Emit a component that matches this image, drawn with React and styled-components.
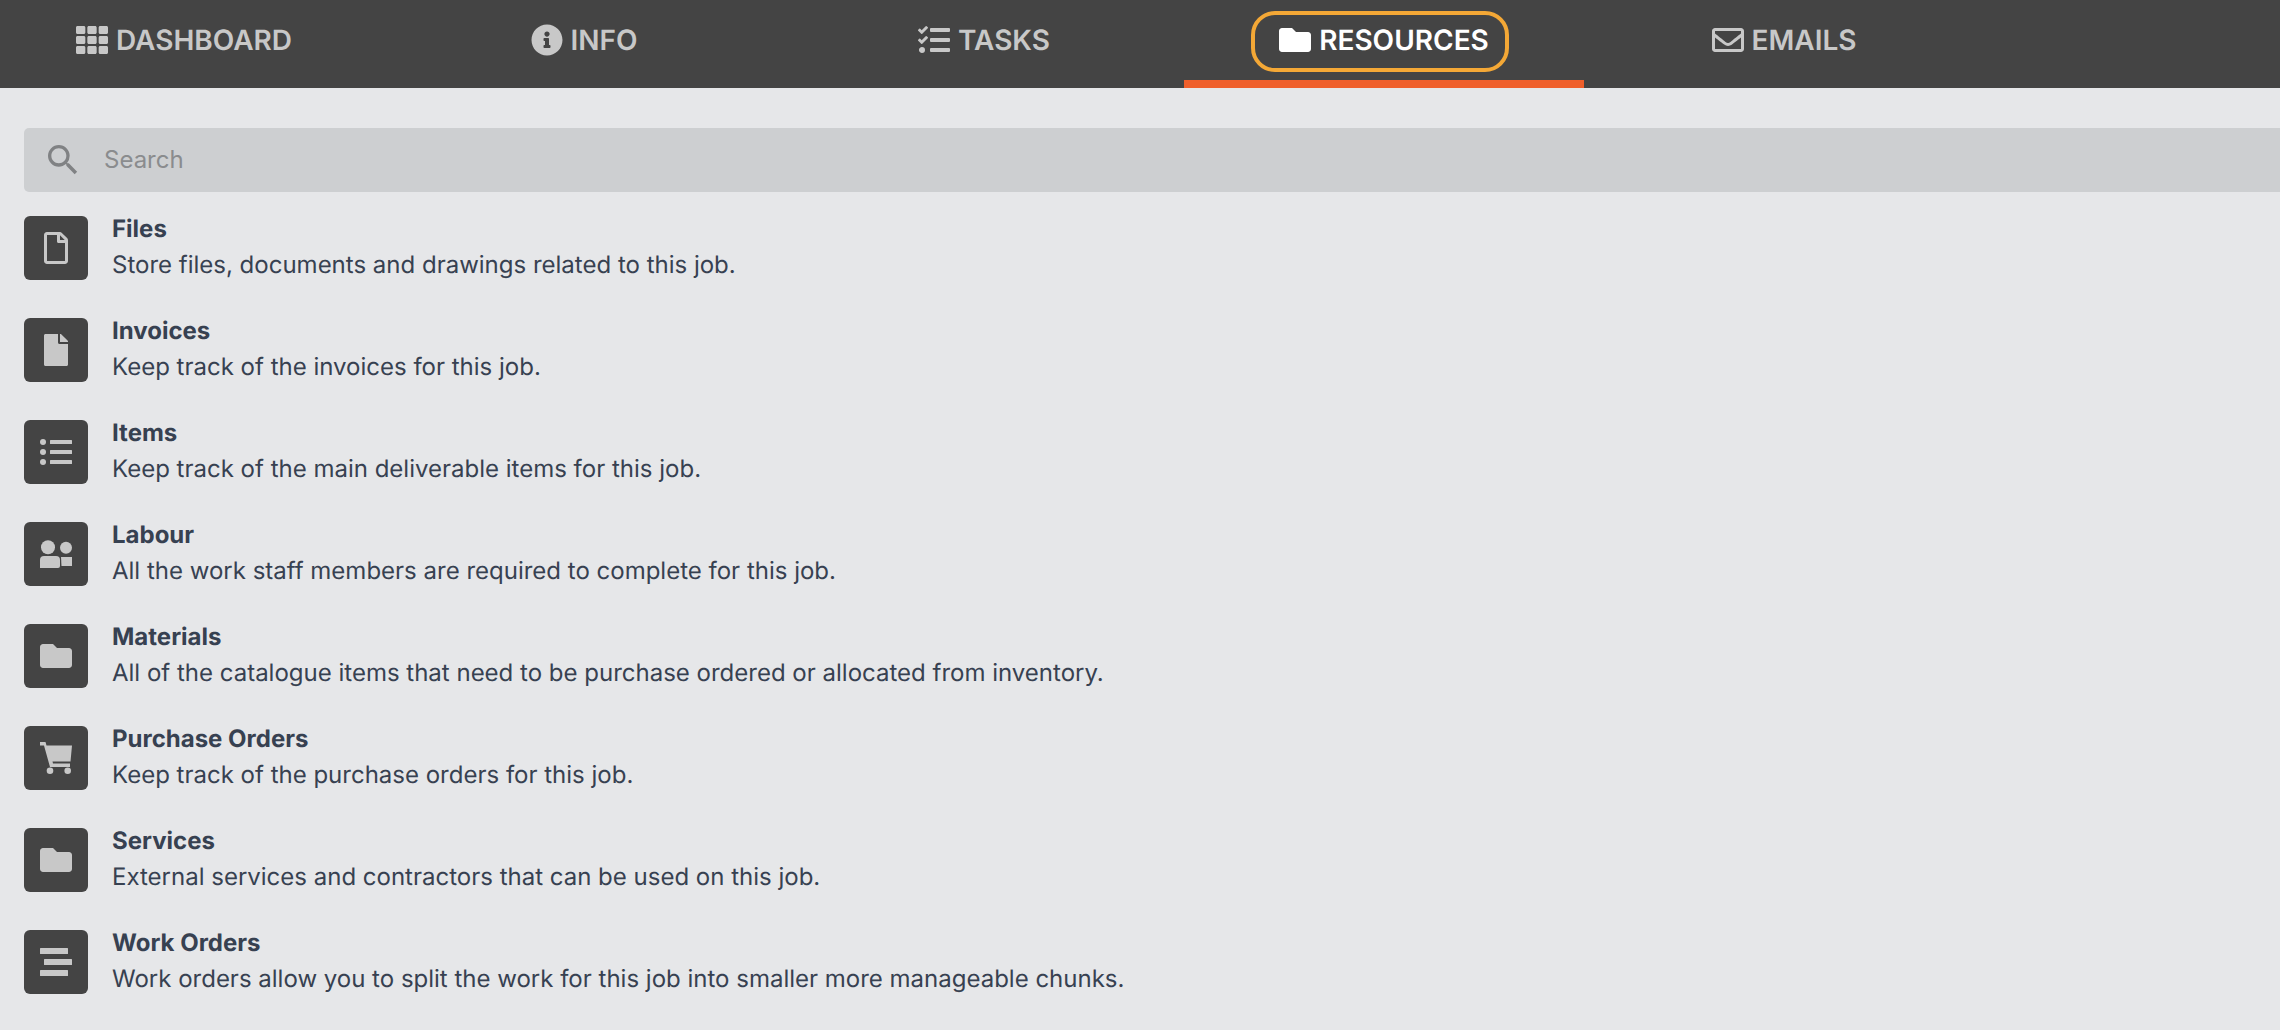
import styled, { createGlobalStyle } from 'styled-components'
import { FaTh, FaInfoCircle, FaTasks, FaFolder, FaRegEnvelope, FaRegFile, FaFile } from 'react-icons/fa'
import { MdSearch } from 'react-icons/md'

function ListIcon() {
  return (
    <svg viewBox="0 0 32 32" fill="currentColor">
      <circle cx="3" cy="6" r="3" />
      <circle cx="3" cy="16" r="3" />
      <circle cx="3" cy="26" r="3" />
      <rect x="10" y="4" width="22" height="4" rx="0.5" />
      <rect x="10" y="14" width="22" height="4" rx="0.5" />
      <rect x="10" y="24" width="22" height="4" rx="0.5" />
    </svg>
  )
}

function PeopleIcon() {
  return (
    <svg viewBox="0 0 32 32" fill="currentColor">
      <circle cx="8" cy="9.3" r="7" />
      <circle cx="26" cy="9.7" r="6" />
      <path d="M0 22a4 4 0 0 1 4-4h12a4 4 0 0 1 4 4v6a2 2 0 0 1-2 2H0z" />
      <path d="M21 19h11v9H21.500z" />
    </svg>
  )
}

function CartIcon() {
  return (
    <svg viewBox="0 0 32 32" fill="currentColor">
      <path d="M0 0h5.500l1 3.500H32l-1.500 16H12.500l.5 2h17v3.500H10L4 3.500H0z" />
      <circle cx="10" cy="28.700" r="3.300" />
      <circle cx="27.700" cy="28.700" r="3.300" />
    </svg>
  )
}

function StackIcon() {
  return (
    <svg viewBox="0 0 32 32" fill="currentColor">
      <rect x="0" y="2" width="28" height="6" rx="0.5" />
      <rect x="4" y="13" width="28" height="6" rx="0.5" />
      <rect x="0" y="24" width="28" height="6" rx="0.5" />
    </svg>
  )
}

const tabs = [
  { label: 'Dashboard', icon: FaTh },
  { label: 'Info', icon: FaInfoCircle },
  { label: 'Tasks', icon: FaTasks },
  { label: 'Resources', icon: FaFolder, active: true },
  { label: 'Emails', icon: FaRegEnvelope },
]

const resources = [
  { title: 'Files', text: 'Store files, documents and drawings related to this job.', icon: FaRegFile },
  { title: 'Invoices', text: 'Keep track of the invoices for this job.', icon: FaFile },
  { title: 'Items', text: 'Keep track of the main deliverable items for this job.', icon: ListIcon },
  { title: 'Labour', text: 'All the work staff members are required to complete for this job.', icon: PeopleIcon },
  { title: 'Materials', text: 'All of the catalogue items that need to be purchase ordered or allocated from inventory.', icon: FaFolder },
  { title: 'Purchase Orders', text: 'Keep track of the purchase orders for this job.', icon: CartIcon },
  { title: 'Services', text: 'External services and contractors that can be used on this job.', icon: FaFolder },
  { title: 'Work Orders', text: 'Work orders allow you to split the work for this job into smaller more manageable chunks.', icon: StackIcon },
]

export default function App() {
  return (
    <Page>
      <GlobalStyle />
      <TabBar>
        {tabs.map(({ label, icon: Icon, active }) => (
          <Tab key={label} $active={active}>
            <TabPill $active={active}>
              <Icon />
              {label}
            </TabPill>
          </Tab>
        ))}
      </TabBar>
      <Content>
        <SearchBar>
          <MdSearch />
          <SearchInput placeholder="Search" />
        </SearchBar>
        <ResourceList>
          {resources.map(({ title, text, icon: Icon }) => (
            <ResourceRow key={title}>
              <IconBox><Icon /></IconBox>
              <ResourceText>
                <ResourceTitle>{title}</ResourceTitle>
                <ResourceDesc>{text}</ResourceDesc>
              </ResourceText>
            </ResourceRow>
          ))}
        </ResourceList>
      </Content>
    </Page>
  )
}

const GlobalStyle = createGlobalStyle`
  html, body {
    margin: 0;
    padding: 0;
    background: #e6e7e9;
    overflow: hidden;
  }
  * {
    box-sizing: border-box;
  }
`

const Page = styled.div`
  width: 2280px;
  height: 1030px;
  overflow: hidden;
  font-family: Inter, "Liberation Sans", sans-serif;
  text-rendering: geometricPrecision;
  -webkit-font-smoothing: antialiased;
  background: #e6e7e9;
`

const TabBar = styled.nav`
  display: flex;
  height: 88px;
  background: #444444;
  margin-left: -16px;
`

const Tab = styled.div`
  width: 400px;
  height: 88px;
  display: flex;
  justify-content: center;
  align-items: flex-start;
  padding-top: 11px;
  border-bottom: 8px solid ${({ $active }) => ($active ? '#ef5f2b' : 'transparent')};
`

const TabPill = styled.div`
  display: flex;
  align-items: center;
  gap: 8px;
  height: 61px;
  margin-right: 8px;
  padding: 0 16px 3px 24px;
  border: 4px solid ${({ $active }) => ($active ? '#f4a836' : 'transparent')};
  border-radius: 24px;
  font-size: 28px;
  font-weight: 560;
  text-transform: uppercase;
  color: ${({ $active }) => ($active ? '#ffffff' : '#c8c8c8')};

  svg {
    width: 32px;
    height: 32px;
  }
`

const Content = styled.main`
  padding: 40px 0 0 24px;
`

const SearchBar = styled.div`
  display: flex;
  align-items: center;
  height: 64px;
  margin-right: -16px;
  padding-left: 19px;
  gap: 21px;
  background: #cdcfd1;
  border-radius: 5px;

  svg {
    width: 40px;
    height: 40px;
    color: #808284;
    flex-shrink: 0;
  }
`

const SearchInput = styled.input`
  flex: 1;
  border: none;
  outline: none;
  background: transparent;
  padding: 0 0 2px;
  font-family: inherit;
  font-size: 24px;
  color: #374151;

  &::placeholder {
    color: #8a8c8e;
    opacity: 1;
  }
`

const ResourceList = styled.div`
  display: flex;
  flex-direction: column;
  gap: 38px;
  margin-top: 24px;
`

const ResourceRow = styled.div`
  display: flex;
  align-items: center;
  height: 64px;
  gap: 24px;
`

const IconBox = styled.div`
  width: 64px;
  height: 64px;
  display: flex;
  align-items: center;
  justify-content: center;
  background: #444444;
  border-radius: 6px;
  color: #c8c8c8;

  svg {
    width: 32px;
    height: 32px;
  }
`

const ResourceText = styled.div`
  display: flex;
  flex-direction: column;
  padding-bottom: 2px;
`

const ResourceTitle = styled.div`
  font-size: 24px;
  line-height: 36px;
  font-weight: 700;
  color: #374151;
`

const ResourceDesc = styled.div`
  font-size: 24px;
  line-height: 36px;
  font-weight: 400;
  color: #374151;
`
